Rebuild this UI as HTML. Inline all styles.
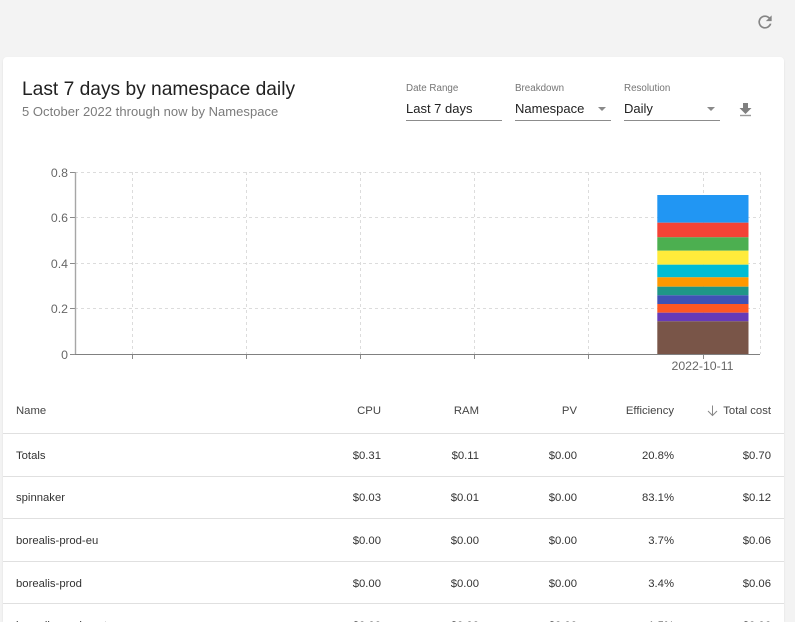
<!DOCTYPE html>
<html>
<head>
<meta charset="utf-8">
<style>
html,body{margin:0;padding:0;width:795px;height:622px;overflow:hidden;background:#f3f3f3;font-family:"Liberation Sans",sans-serif;}
#wrap{position:relative;width:795px;height:622px;overflow:hidden;background:#f3f3f3;}
.abs{position:absolute;white-space:nowrap;}
#card{position:absolute;left:3px;top:57px;width:781px;height:565px;background:#fff;border-radius:4px 4px 0 0;box-shadow:0 1px 2px rgba(0,0,0,.08);}
.title{left:22px;top:78px;font-size:19.2px;line-height:24px;color:#212121;}
.sub{left:22px;top:104px;font-size:13px;line-height:16px;color:#7b7b7b;letter-spacing:.03px;}
.lab{top:83px;font-size:9.8px;line-height:12px;color:#757575;}
.val{top:100px;font-size:13px;line-height:17px;color:#212121;}
.ul{top:120px;width:96px;height:1px;background:#8c8c8c;}
.tri{top:107px;width:0;height:0;border-left:4px solid transparent;border-right:4px solid transparent;border-top:4px solid #8a8a8a;}
.c{font-size:11.3px;line-height:14px;color:#333;}
.h{color:#444;}
.r{text-align:right;width:80px;}
.line{left:3px;width:781px;height:1px;background:#e0e0e0;}
#last{position:absolute;left:0;top:604px;width:795px;height:18px;overflow:hidden;}
#last .c{top:15px;}
svg text{font-family:"Liberation Sans",sans-serif;}
</style>
</head>
<body>
<div id="wrap">
<div id="card"></div>

<svg class="abs" style="left:755px;top:11.5px" width="20" height="20" viewBox="0 0 24 24"><path fill="#858585" d="M17.65 6.35A7.95 7.95 0 0 0 12 4a8 8 0 1 0 7.73 10h-2.08A6 6 0 1 1 12 6c1.66 0 3.14.69 4.22 1.78L13 11h7V4l-2.35 2.35z"/></svg>

<div class="abs title">Last 7 days by namespace daily</div>
<div class="abs sub">5 October 2022 through now by Namespace</div>

<div class="abs lab" style="left:406px">Date Range</div>
<div class="abs val" style="left:406px">Last 7 days</div>
<div class="abs ul" style="left:406px"></div>

<div class="abs lab" style="left:515px">Breakdown</div>
<div class="abs val" style="left:515px">Namespace</div>
<div class="abs ul" style="left:515px"></div>
<div class="abs tri" style="left:597.5px"></div>

<div class="abs lab" style="left:624px">Resolution</div>
<div class="abs val" style="left:624px">Daily</div>
<div class="abs ul" style="left:624px"></div>
<div class="abs tri" style="left:706.5px"></div>

<svg class="abs" style="left:739px;top:102px" width="13" height="15" viewBox="0 0 13 15"><path fill="#808080" d="M4 1h5v5h3.5L6.5 12 .5 6H4z"/><rect x="1" y="12.8" width="11" height="1.4" fill="#999"/></svg>

<svg class="abs" style="left:0;top:150px" width="795" height="230" viewBox="0 150 795 230">
  <g stroke="#dcdcdc" stroke-width="1" stroke-dasharray="3 3" fill="none">
    <path d="M75 172.5H760M75 217.5H760M75 263.5H760M75 308.5H760"/>
    <path d="M132.5 172V354M246.5 172V354M360.5 172V354M474.5 172V354M588.5 172V354M703.5 172V354M760.5 172V354"/>
  </g>
  <g stroke="#8a8a8a" stroke-width="1" fill="none">
    <path d="M70 172.5H75M70 217.5H75M70 263.5H75M70 308.5H75M70 354.5H75"/>
    <path d="M132.5 355V359M246.5 355V359M360.5 355V359M474.5 355V359M588.5 355V359M703.5 355V359"/>
    <path d="M75.5 172V355" stroke="#a6a6a6" stroke-width="1.4"/>
    <path d="M75 354.5H760" stroke="#808080"/>
  </g>
  <g>
    <rect x="657.3" y="195" width="91.2" height="27.7" fill="#2196f3"/>
    <rect x="657.3" y="222.7" width="91.2" height="14.6" fill="#f44336"/>
    <rect x="657.3" y="237.3" width="91.2" height="13.4" fill="#4caf50"/>
    <rect x="657.3" y="250.7" width="91.2" height="14" fill="#ffeb3b"/>
    <rect x="657.3" y="264.7" width="91.2" height="12.6" fill="#00bcd4"/>
    <rect x="657.3" y="277.3" width="91.2" height="9.4" fill="#ff9800"/>
    <rect x="657.3" y="286.7" width="91.2" height="8.6" fill="#1f9688"/>
    <rect x="657.3" y="295.3" width="91.2" height="8.7" fill="#3f51b5"/>
    <rect x="657.3" y="304" width="91.2" height="8.7" fill="#ff5722"/>
    <rect x="657.3" y="312.7" width="91.2" height="8.6" fill="#673ab7"/>
    <rect x="657.3" y="321.3" width="91.2" height="32.7" fill="#795548"/>
  </g>
  <g font-size="12.3" fill="#666" text-anchor="end">
    <text x="68" y="177">0.8</text>
    <text x="68" y="222">0.6</text>
    <text x="68" y="268">0.4</text>
    <text x="68" y="313">0.2</text>
    <text x="68" y="359">0</text>
  </g>
  <text x="702.5" y="370" font-size="12.3" fill="#666" text-anchor="middle">2022-10-11</text>
</svg>

<div class="abs c h" style="left:16px;top:404px">Name</div>
<div class="abs c h r" style="left:301px;top:404px">CPU</div>
<div class="abs c h r" style="left:399px;top:404px">RAM</div>
<div class="abs c h r" style="left:497px;top:404px">PV</div>
<div class="abs c h r" style="left:594px;top:404px">Efficiency</div>
<svg class="abs" style="left:706px;top:404px" width="13" height="13" viewBox="0 0 13 13"><path fill="none" stroke="#888" stroke-width="1" d="M6.5 1.5V11.5M2 7l4.5 4.5L11 7"/></svg>
<div class="abs c h r" style="left:691px;top:404px">Total cost</div>
<div class="abs line" style="top:433px"></div>

<div class="abs c" style="left:16px;top:449px">Totals</div>
<div class="abs c r" style="left:301px;top:449px">$0.31</div>
<div class="abs c r" style="left:399px;top:449px">$0.11</div>
<div class="abs c r" style="left:497px;top:449px">$0.00</div>
<div class="abs c r" style="left:594px;top:449px">20.8%</div>
<div class="abs c r" style="left:691px;top:449px">$0.70</div>
<div class="abs line" style="top:476px"></div>

<div class="abs c" style="left:16px;top:491px">spinnaker</div>
<div class="abs c r" style="left:301px;top:491px">$0.03</div>
<div class="abs c r" style="left:399px;top:491px">$0.01</div>
<div class="abs c r" style="left:497px;top:491px">$0.00</div>
<div class="abs c r" style="left:594px;top:491px">83.1%</div>
<div class="abs c r" style="left:691px;top:491px">$0.12</div>
<div class="abs line" style="top:518px"></div>

<div class="abs c" style="left:16px;top:534px">borealis-prod-eu</div>
<div class="abs c r" style="left:301px;top:534px">$0.00</div>
<div class="abs c r" style="left:399px;top:534px">$0.00</div>
<div class="abs c r" style="left:497px;top:534px">$0.00</div>
<div class="abs c r" style="left:594px;top:534px">3.7%</div>
<div class="abs c r" style="left:691px;top:534px">$0.06</div>
<div class="abs line" style="top:561px"></div>

<div class="abs c" style="left:16px;top:577px">borealis-prod</div>
<div class="abs c r" style="left:301px;top:577px">$0.00</div>
<div class="abs c r" style="left:399px;top:577px">$0.00</div>
<div class="abs c r" style="left:497px;top:577px">$0.00</div>
<div class="abs c r" style="left:594px;top:577px">3.4%</div>
<div class="abs c r" style="left:691px;top:577px">$0.06</div>
<div class="abs line" style="top:603px"></div>

<div id="last">
<div class="abs c" style="left:16px">borealis-prod-east</div>
<div class="abs c r" style="left:301px">$0.00</div>
<div class="abs c r" style="left:399px">$0.00</div>
<div class="abs c r" style="left:497px">$0.00</div>
<div class="abs c r" style="left:594px">1.5%</div>
<div class="abs c r" style="left:691px">$0.06</div>
</div>
</div>
</body>
</html>
